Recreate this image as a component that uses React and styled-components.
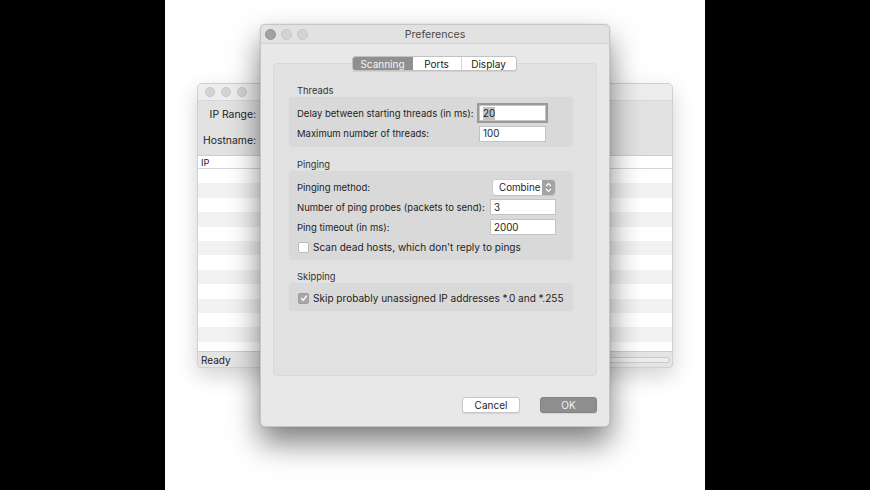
import styled, { createGlobalStyle } from 'styled-components';

const GlobalStyle = createGlobalStyle`
  html, body {
    margin: 0;
    padding: 0;
    background: #000;
  }
  body {
    font-family: Inter, "Liberation Sans", sans-serif;
    -webkit-font-smoothing: antialiased;
  }
`;

const Screen = styled.div`
  height: 490px;
  display: flex;
  justify-content: center;
`;

const Desktop = styled.div`
  position: relative;
  width: 540px;
  height: 100%;
  background: #fff;
  overflow: hidden;
`;

/* ---------- background scanner window ---------- */

const ScannerWindow = styled.section`
  position: absolute;
  left: 32px;
  top: 83px;
  width: 476px;
  height: 285px;
  box-sizing: border-box;
  display: flex;
  flex-direction: column;
  background: #e4e4e4;
  border: 1px solid #d0d0d0;
  border-radius: 5px 5px 4px 4px;
  box-shadow: 0 8px 22px rgba(0, 0, 0, 0.18);
  overflow: hidden;
`;

const ScannerTitle = styled.div`
  height: 16px;
  flex: none;
  display: flex;
  align-items: center;
  gap: 6px;
  padding-left: 7px;
  background: #ededed;
  border-bottom: 1px solid #d6d6d6;
`;

const Light = styled.span`
  width: ${(p) => p.$size || 10}px;
  height: ${(p) => p.$size || 10}px;
  border-radius: 50%;
  box-sizing: border-box;
  background: ${(p) => (p.$dark ? '#a2a2a2' : '#d3d3d3')};
  border: 1px solid ${(p) => (p.$dark ? '#959595' : '#c6c6c6')};
`;

const Toolbar = styled.div`
  height: 54px;
  flex: none;
  display: grid;
  grid-template-columns: 58px 1fr;
  grid-auto-rows: 26px;
  align-items: center;
  column-gap: 4px;
  background: #e2e2e2;
`;

const ToolLabel = styled.span`
  justify-self: end;
  font-size: 10.4px;
  color: #222;
`;

const ToolInput = styled.div`
  height: 18px;
  width: 200px;
  background: #fff;
  border: 1px solid #c4c4c4;
`;

const Table = styled.div`
  flex: 1;
  display: flex;
  flex-direction: column;
  background: #fff;
  border-top: 1px solid #cdcdcd;
  border-bottom: 1px solid #cdcdcd;
`;

const HeaderRow = styled.div`
  height: 12px;
  flex: none;
  display: flex;
  align-items: center;
  padding-left: 3px;
  font-size: 9.2px;
  color: #222;
  border-bottom: 1px solid #d6d6d6;
`;

const Rows = styled.div`
  flex: 1;
  background: repeating-linear-gradient(
    to bottom,
    #fff 0,
    #fff 14.4px,
    #f2f2f2 14.4px,
    #f2f2f2 28.8px
  );
`;

const StatusBar = styled.div`
  height: 15px;
  flex: none;
  display: flex;
  align-items: center;
  gap: 8px;
  padding: 0 2px 0 3px;
  font-size: 10px;
  color: #222;
`;

const Progress = styled.div`
  flex: 1;
  height: 4px;
  margin-left: 60px;
  border: 1px solid #c9c9c9;
  border-radius: 3px;
  background: #ececec;
`;

/* ---------- preferences dialog ---------- */

const Dialog = styled.section`
  position: absolute;
  left: 95px;
  top: 24px;
  width: 350px;
  height: 403px;
  box-sizing: border-box;
  display: flex;
  flex-direction: column;
  background: #e8e8e8;
  border: 1px solid #c6c6c6;
  border-radius: 5px;
  box-shadow: 0 16px 30px rgba(0, 0, 0, 0.5), 0 0 2px rgba(0, 0, 0, 0.15);
`;

const DialogTitle = styled.header`
  position: relative;
  height: 18px;
  flex: none;
  display: flex;
  align-items: center;
  gap: 5px;
  padding-left: 4px;
  background: #e2e2e2;
  border-bottom: 1px solid #d2d2d2;
  border-radius: 5px 5px 0 0;
`;

const TitleText = styled.span`
  position: absolute;
  left: 0;
  right: 0;
  text-align: center;
  font-size: 10.6px;
  color: #4a4a4a;
  pointer-events: none;
`;

const DialogBody = styled.div`
  flex: 1;
  display: flex;
  flex-direction: column;
  padding: 19px 12px 13px 12px;
`;

const TabBox = styled.div`
  height: 313px;
  box-sizing: border-box;
  display: flex;
  flex-direction: column;
  padding: 0 23px 0 15px;
  background: #e1e1e1;
  border: 1px solid #d9d9d9;
  border-radius: 4px;
`;

const Segmented = styled.div`
  align-self: center;
  margin: -8px 0 0 6px;
  display: flex;
  height: 15px;
  box-sizing: border-box;
  background: #fff;
  border: 1px solid #c2c2c2;
  border-radius: 3px;
  box-shadow: 0 1px 1px rgba(0, 0, 0, 0.08);
  overflow: hidden;
`;

const Segment = styled.span`
  width: ${(p) => p.$w}px;
  display: flex;
  align-items: center;
  justify-content: center;
  font-size: 10px;
  color: ${(p) => (p.$active ? '#f4f4f4' : '#222')};
  background: ${(p) => (p.$active ? '#8f8f8f' : 'transparent')};
  border-left: ${(p) => (p.$divider ? '1px solid #d4d4d4' : 'none')};
`;

const SectionLabel = styled.div`
  margin-top: ${(p) => p.$top}px;
  height: 12px;
  line-height: 12px;
  padding-left: 8px;
  font-size: 9.4px;
  color: #333;
`;

const Section = styled.div`
  display: grid;
  grid-template-columns: ${(p) => p.$cols || '1fr'};
  grid-auto-rows: ${(p) => p.$row || 20}px;
  align-items: center;
  padding: ${(p) => p.$pad || '6px 0 4px 8px'};
  background: #d9d9d9;
  border-radius: 4px;
`;

const Label = styled.span`
  font-size: 9.5px;
  color: #1e1e1e;
  white-space: nowrap;
`;

const TextField = styled.div`
  height: 16px;
  width: ${(p) => p.$w || 66}px;
  box-sizing: border-box;
  display: flex;
  align-items: center;
  padding-left: 3px;
  background: #fff;
  border: 1px solid #c3c3c3;
  font-size: 9.8px;
  color: #1e1e1e;
  box-shadow: ${(p) => (p.$focus ? '0 0 0 2px #9a9a9a' : 'none')};
`;

const Selected = styled.span`
  background: #c2c2c2;
  padding: 1px 0;
`;

const SelectBox = styled.div`
  margin-left: 3px;
  width: 62px;
  height: 15px;
  box-sizing: border-box;
  display: flex;
  background: #fff;
  border-radius: 3px;
  box-shadow: 0 0 0 0.5px #c8c8c8, 0 1px 1px rgba(0, 0, 0, 0.12);
  overflow: hidden;
`;

const SelectText = styled.span`
  flex: 1;
  white-space: nowrap;
  padding-left: 6px;
  line-height: 15px;
  font-size: 9.8px;
  color: #1e1e1e;
`;

const Stepper = styled.span`
  width: 13px;
  flex: none;
  display: flex;
  align-items: center;
  justify-content: center;
  background: #a3a3a3;
`;

const CheckRow = styled.label`
  display: flex;
  align-items: center;
  gap: 4px;
  grid-column: 1 / -1;
`;

const Box = styled.span`
  width: 11px;
  height: 11px;
  margin-left: 1px;
  box-sizing: border-box;
  display: flex;
  align-items: center;
  justify-content: center;
  border-radius: 2px;
  background: ${(p) => (p.$checked ? '#a8a8a8' : '#fff')};
  border: 1px solid ${(p) => (p.$checked ? '#9d9d9d' : '#bcbcbc')};
`;

const CheckLabel = styled(Label)`
  font-size: 10.05px;
`;

const ButtonRow = styled.div`
  margin-top: auto;
  display: flex;
  justify-content: flex-end;
  gap: 20px;
`;

const Button = styled.button`
  width: ${(p) => p.$w}px;
  height: 16px;
  padding: 0;
  box-sizing: border-box;
  font-family: inherit;
  font-size: 10px;
  border-radius: 3px;
  color: ${(p) => (p.$primary ? '#f2f2f2' : '#1e1e1e')};
  background: ${(p) => (p.$primary ? '#8e8e8e' : '#fff')};
  border: 1px solid ${(p) => (p.$primary ? '#838383' : '#c6c6c6')};
  box-shadow: 0 1px 1px rgba(0, 0, 0, 0.08);
`;

const StepperIcon = () => (
  <svg width="7" height="11" viewBox="0 0 7 11" fill="none" stroke="#fff" strokeWidth="1.2">
    <path d="M1 4 L3.5 1.5 L6 4" />
    <path d="M1 7 L3.5 9.5 L6 7" />
  </svg>
);

const Check = () => (
  <svg width="8" height="8" viewBox="0 0 8 8" fill="none" stroke="#fff" strokeWidth="1.4">
    <path d="M1.2 4.2 L3.2 6.2 L6.8 1.6" />
  </svg>
);

export default function App() {
  return (
    <>
      <GlobalStyle />
      <Screen>
        <Desktop>
          <ScannerWindow>
            <ScannerTitle>
              <Light />
              <Light />
              <Light />
            </ScannerTitle>
            <Toolbar>
              <ToolLabel>IP Range:</ToolLabel>
              <ToolInput />
              <ToolLabel>Hostname:</ToolLabel>
              <ToolInput />
            </Toolbar>
            <Table>
              <HeaderRow>IP</HeaderRow>
              <Rows />
            </Table>
            <StatusBar>
              Ready
              <Progress />
            </StatusBar>
          </ScannerWindow>

          <Dialog>
            <DialogTitle>
              <Light $dark $size={11} />
              <Light $size={11} />
              <Light $size={11} />
              <TitleText>Preferences</TitleText>
            </DialogTitle>
            <DialogBody>
              <TabBox>
                <Segmented>
                  <Segment $w={60} $active>Scanning</Segment>
                  <Segment $w={48}>Ports</Segment>
                  <Segment $w={54} $divider>Display</Segment>
                </Segmented>

                <SectionLabel $top={14}>Threads</SectionLabel>
                <Section $cols="182px 67px" $pad="6px 0 3px 8px" $row={20.5}>
                  <Label>Delay between starting threads (in ms):</Label>
                  <TextField $w={67} $focus>
                    <Selected>20</Selected>
                  </TextField>
                  <Label>Maximum number of threads:</Label>
                  <TextField $w={67}>100</TextField>
                </Section>

                <SectionLabel $top={12}>Pinging</SectionLabel>
                <Section $cols="193px 66px" $pad="6px 0 3px 8px">
                  <Label>Pinging method:</Label>
                  <SelectBox>
                    <SelectText>Combine</SelectText>
                    <Stepper>
                      <StepperIcon />
                    </Stepper>
                  </SelectBox>
                  <Label>Number of ping probes (packets to send):</Label>
                  <TextField>3</TextField>
                  <Label>Ping timeout (in ms):</Label>
                  <TextField>2000</TextField>
                  <CheckRow>
                    <Box />
                    <CheckLabel>Scan dead hosts, which don't reply to pings</CheckLabel>
                  </CheckRow>
                </Section>

                <SectionLabel $top={11}>Skipping</SectionLabel>
                <Section $pad="5px 0 3px 8px">
                  <CheckRow>
                    <Box $checked>
                      <Check />
                    </Box>
                    <CheckLabel>Skip probably unassigned IP addresses *.0 and *.255</CheckLabel>
                  </CheckRow>
                </Section>
              </TabBox>

              <ButtonRow>
                <Button $w={58}>Cancel</Button>
                <Button $w={57} $primary>OK</Button>
              </ButtonRow>
            </DialogBody>
          </Dialog>
        </Desktop>
      </Screen>
    </>
  );
}
